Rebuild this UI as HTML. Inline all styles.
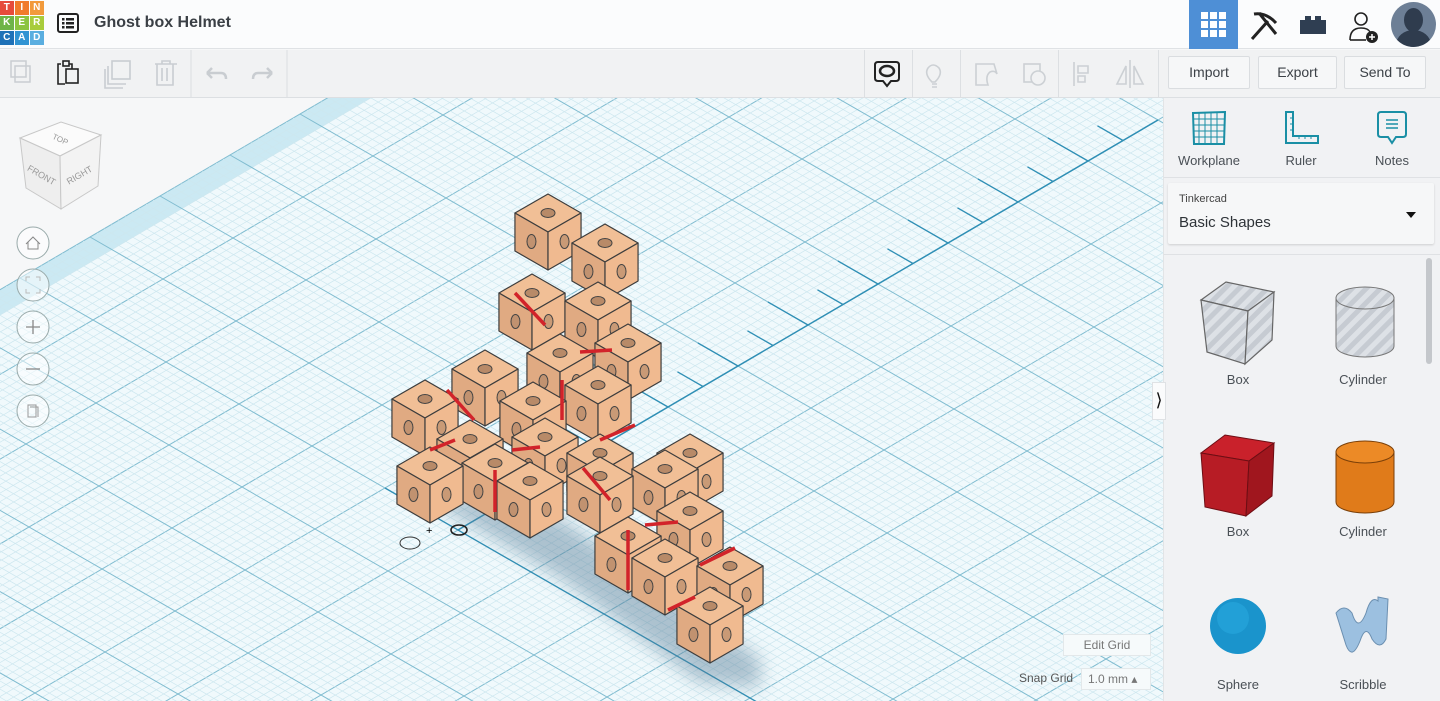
<!DOCTYPE html>
<html><head><meta charset="utf-8">
<style>
*{margin:0;padding:0;box-sizing:border-box}
html,body{width:1440px;height:701px;overflow:hidden}
body{font-family:"Liberation Sans",sans-serif;background:#f6f7f8;position:relative}
#hdr{position:absolute;left:0;top:0;width:1440px;height:49px;background:#fbfcfd;border-bottom:1px solid #dfe2e5}
#tb{position:absolute;left:0;top:50px;width:1440px;height:48px;background:#f1f2f3;border-bottom:1px solid #dcdfe2}
.logo{position:absolute;left:0;top:0;width:44px;height:46px}
.logo div{position:absolute;width:13.5px;height:13.5px;color:#fff;font-size:10px;font-weight:bold;text-align:center;line-height:14px}
.title{position:absolute;left:94px;top:14px;font-size:16px;color:#3a3f45;font-weight:bold}
.btn{position:absolute;top:56px;height:33px;background:#f6f7f8;border:1px solid #dadde0;border-radius:2px;font-size:14px;color:#3c4147;text-align:center;line-height:31px}
#panel{position:absolute;left:1163px;top:98px;width:277px;height:603px;background:#f1f2f4;border-left:1px solid #e2e4e6;overflow:hidden}
.lbl{position:absolute;font-size:13px;color:#4a5056;text-align:center}
.vsep{position:absolute;top:50px;width:1px;height:47px;background:#dcdfe2}
</style></head><body>
<svg id="view" width="1163" height="603" style="position:absolute;left:0;top:98px"></svg>

<div id="hdr">
 <div class="logo">
  <div style="left:0;top:1px;background:#e64b3c">T</div><div style="left:15px;top:1px;background:#f07b2c">I</div><div style="left:30px;top:1px;background:#f29a3b">N</div>
  <div style="left:0;top:16px;background:#6eb448">K</div><div style="left:15px;top:16px;background:#8cc440">E</div><div style="left:30px;top:16px;background:#a8cc3c">R</div>
  <div style="left:0;top:31px;background:#1f72b8">C</div><div style="left:15px;top:31px;background:#3194d3">A</div><div style="left:30px;top:31px;background:#5aaee0">D</div>
 </div>
 <svg style="position:absolute;left:57px;top:13px" width="22" height="20"><rect x="1" y="1" width="20" height="18" rx="2" fill="none" stroke="#222" stroke-width="2"/><g fill="#222"><rect x="5" y="5" width="2.5" height="2.5"/><rect x="9" y="5" width="8" height="2.5"/><rect x="5" y="9" width="2.5" height="2.5"/><rect x="9" y="9" width="8" height="2.5"/><rect x="5" y="13" width="2.5" height="2.5"/><rect x="9" y="13" width="8" height="2.5"/></g></svg>
 <div class="title">Ghost box Helmet</div>
 <div style="position:absolute;left:1189px;top:0;width:49px;height:49px;background:#4e8fd6"></div>
 <svg style="position:absolute;left:1201px;top:12px" width="25" height="25"><g fill="#fff"><rect x="0" y="0" width="7" height="7"/><rect x="9" y="0" width="7" height="7"/><rect x="18" y="0" width="7" height="7"/><rect x="0" y="9" width="7" height="7"/><rect x="9" y="9" width="7" height="7"/><rect x="18" y="9" width="7" height="7"/><rect x="0" y="18" width="7" height="7"/><rect x="9" y="18" width="7" height="7"/><rect x="18" y="18" width="7" height="7"/></g></svg>
 <svg style="position:absolute;left:1248px;top:9px" width="32" height="32"><path d="M6 5 Q18 3 28 14 M11 4 L28 25 M20 12 L4 30" stroke="#222" stroke-width="3" fill="none"/></svg>
 <svg style="position:absolute;left:1298px;top:14px" width="30" height="22"><path d="M2 6 h5 v-4 h6 v4 h4 v-4 h6 v4 h5 v14 h-26z" fill="#2f3e52"/></svg>
 <svg style="position:absolute;left:1348px;top:10px" width="32" height="34"><circle cx="13" cy="9" r="6" fill="none" stroke="#222" stroke-width="1.6"/><path d="M2 30 Q2 18 13 18 Q20 18 22 22" fill="none" stroke="#222" stroke-width="1.6"/><line x1="2" y1="30" x2="18" y2="30" stroke="#222" stroke-width="1.6"/><circle cx="24" cy="27" r="6" fill="#222"/><path d="M24 24v6M21 27h6" stroke="#fff" stroke-width="1.5"/></svg>
 <div style="position:absolute;left:1391px;top:2px;width:45px;height:45px;border-radius:50%;background:#6d7f96;overflow:hidden"><div style="position:absolute;left:13px;top:6px;width:19px;height:24px;border-radius:50%;background:#2f3c4e"></div><div style="position:absolute;left:5px;top:28px;width:35px;height:30px;border-radius:50%;background:#2f3c4e"></div></div>
</div>

<div id="tb">
 <svg style="position:absolute;left:0;top:0" width="300" height="48">
  <g fill="none" stroke="#c9cdd1" stroke-width="1.5"><rect x="11" y="11" width="15" height="16"/><rect x="15" y="16" width="15" height="16"/></g>
  <g fill="none" stroke="#222" stroke-width="1.6"><path d="M61 14 h-3 v20 h7 M69 14 h3 v5"/><rect x="63" y="11" width="6" height="5"/><rect x="66" y="19" width="12" height="14"/></g>
  <g fill="none" stroke="#c9cdd1" stroke-width="1.6"><rect x="112" y="11" width="18" height="18"/><path d="M108 16 v18 h18"/><path d="M105 19 v19 h18" /></g>
  <g fill="none" stroke="#c9cdd1" stroke-width="1.6"><path d="M155 14h22M162 14v-3h8v3M157 14v21h16v-21M162 18v13M167 18v13"/></g>
  <line x1="191" y1="0" x2="191" y2="48" stroke="#dcdfe2"/>
  <path d="M207 23 h14 q5 0 5 6 M207 23 l5 -5 M207 23 l5 5" stroke="#c9cdd1" stroke-width="2.5" fill="none"/>
  <path d="M272 23 h-14 q-5 0 -5 6 M272 23 l-5 -5 M272 23 l-5 5" stroke="#c9cdd1" stroke-width="2.5" fill="none"/>
  <line x1="287" y1="0" x2="287" y2="48" stroke="#dcdfe2"/>
 </svg>
 <div class="vsep" style="left:864px;top:0"></div><div class="vsep" style="left:912px;top:0"></div><div class="vsep" style="left:960px;top:0"></div><div class="vsep" style="left:1058px;top:0"></div><div class="vsep" style="left:1158px;top:0"></div>
 <svg style="position:absolute;left:870px;top:8px" width="290" height="34">
  <path d="M8 4 h18 q3 0 3 3 v13 q0 3 -3 3 h-5 l-4 5 l-4 -5 h-5 q-3 0 -3 -3 v-13 q0 -3 3 -3z" fill="none" stroke="#222" stroke-width="2"/><ellipse cx="17" cy="13" rx="7" ry="5" fill="none" stroke="#222" stroke-width="2.5"/>
  <path d="M62 24 q-8 -8 -4 -14 q5 -6 11 0 q4 6 -4 14z M62 26h5 M62 29h5" fill="none" stroke="#ccd0d4" stroke-width="1.6"/>
  <path d="M106 6 h18 l3 10 q-2 -4 -7 -2 q-5 4 -2 13 h-12z" fill="none" stroke="#ccd0d4" stroke-width="1.6"/>
  <rect x="154" y="6" width="16" height="18" fill="none" stroke="#ccd0d4" stroke-width="1.6"/><circle cx="168" cy="20" r="7" fill="#f1f2f3" stroke="#ccd0d4" stroke-width="1.6"/>
  <path d="M204 4 v24 M208 8 h10 v7 h-10z M208 18 h7 v6 h-7z" fill="none" stroke="#ccd0d4" stroke-width="1.6"/>
  <path d="M260 2 v28 M256 8 l-9 18 h9z M264 8 l9 18 h-9z" fill="none" stroke="#ccd0d4" stroke-width="1.6"/>
 </svg>
</div>
<div class="btn" style="left:1168px;width:82px">Import</div>
<div class="btn" style="left:1258px;width:79px">Export</div>
<div class="btn" style="left:1344px;width:82px">Send To</div>

<div id="panel">
 <svg style="position:absolute;left:27px;top:13px" width="36" height="34"><path d="M2 2 L34 1 L33 33 L3 33z" fill="none" stroke="#1a8fa5" stroke-width="2"/><g stroke="#1a8fa5" stroke-width="1"><path d="M8 2v31M14 2v31M20 2v31M26 2v31M2 8h32M2 14h32M2 20h32M2 26h32"/></g></svg>
 <svg style="position:absolute;left:118px;top:12px" width="40" height="36"><path d="M4 2h7v24h25v7h-32z" fill="none" stroke="#1a8fa5" stroke-width="2"/><path d="M11 8h-3M11 14h-3M11 20h-3M17 26v3M23 26v3M29 26v3" stroke="#1a8fa5"/></svg>
 <svg style="position:absolute;left:213px;top:12px" width="30" height="36"><path d="M4 2h22q3 0 3 3v19q0 3 -3 3h-7l-4 6l-4-6h-7q-3 0 -3-3v-19q0-3 3-3z" fill="none" stroke="#1a8fa5" stroke-width="2"/><path d="M9 10h12M9 14h12M9 18h12" stroke="#1a8fa5" stroke-width="1.5"/></svg>
 <div class="lbl" style="left:0;top:55px;width:90px">Workplane</div>
 <div class="lbl" style="left:92px;top:55px;width:90px">Ruler</div>
 <div class="lbl" style="left:183px;top:55px;width:90px">Notes</div>
 <div style="position:absolute;left:0;top:79px;width:277px;height:1px;background:#dfe1e4"></div>
 <div style="position:absolute;left:4px;top:85px;width:266px;height:61px;background:#f6f7f8;border-radius:2px;box-shadow:0 1px 2px rgba(0,0,0,.15)">
  <div style="position:absolute;left:11px;top:10px;font-size:11px;color:#444">Tinkercad</div>
  <div style="position:absolute;left:11px;top:31px;font-size:15px;color:#2e3338">Basic Shapes</div>
  <div style="position:absolute;left:238px;top:29px;width:0;height:0;border-left:5px solid transparent;border-right:5px solid transparent;border-top:6px solid #111"></div>
 </div>
 <div style="position:absolute;left:0;top:156px;width:277px;height:1px;background:#dfe1e4"></div>
 <div style="position:absolute;left:262px;top:160px;width:6px;height:106px;background:#c4c7cb;border-radius:3px"></div>
 <svg style="position:absolute;left:0;top:170px" width="260" height="430">
  <defs><pattern id="st" width="10" height="10" patternUnits="userSpaceOnUse" patternTransform="rotate(45)"><rect width="10" height="10" fill="#c6cbd2"/><rect width="5" height="10" fill="#dde1e6"/></pattern></defs>
  <path d="M37 32 L62 14 L110 24 L84 43z" fill="url(#st)" stroke="#666" stroke-width="1.2"/>
  <path d="M37 32 L84 43 L81 96 L43 84z" fill="url(#st)" stroke="#666" stroke-width="1.2"/>
  <path d="M84 43 L110 24 L108 72 L81 96z" fill="url(#st)" stroke="#666" stroke-width="1.2"/>
  <path d="M172 30 v48 a29 11 0 0 0 58 0 v-48z" fill="url(#st)" stroke="#777"/><ellipse cx="201" cy="30" rx="29" ry="11" fill="url(#st)" stroke="#777"/>
  <path d="M37 185 L61 167 L110 175 L85 193z" fill="#c9212b" stroke="#6d0e14"/>
  <path d="M37 185 L85 193 L82 248 L41 239z" fill="#b71c25" stroke="#6d0e14"/>
  <path d="M85 193 L110 175 L108 228 L82 248z" fill="#a0161e" stroke="#6d0e14"/>
  <path d="M172 184 v50 a29 11 0 0 0 58 0 v-50z" fill="#e07b1a" stroke="#7a3f08"/><ellipse cx="201" cy="184" rx="29" ry="11" fill="#ec8a26" stroke="#7a3f08"/>
  <circle cx="74" cy="358" r="28" fill="#1a94cc"/><circle cx="69" cy="350" r="16" fill="#28a8dd" opacity=".6"/>
  <path d="M172 345 q8 -10 16 0 q6 20 14 0 q5 -18 12 -12 l0 -4 l10 2 l-2 40 q-6 12 -14 0 q-6 -16 -12 2 q-8 20 -14 4z" fill="#9cc0e0" stroke="#6b8fb0"/>
 </svg>
 <div class="lbl" style="left:34px;top:274px;width:80px">Box</div>
 <div class="lbl" style="left:159px;top:274px;width:80px">Cylinder</div>
 <div class="lbl" style="left:34px;top:426px;width:80px">Box</div>
 <div class="lbl" style="left:159px;top:426px;width:80px">Cylinder</div>
 <div class="lbl" style="left:34px;top:579px;width:80px">Sphere</div>
 <div class="lbl" style="left:159px;top:579px;width:80px">Scribble</div>
</div>
<div style="position:absolute;left:1152px;top:382px;width:14px;height:38px;background:#fafbfc;border:1px solid #dfe2e5;font-size:18px;line-height:34px;text-align:center;color:#111">&#10217;</div>

<div style="position:absolute;left:1063px;top:634px;width:88px;height:22px;background:#f6fafb;border:1px solid #e3e8ea;font-size:12px;color:#777;text-align:center;line-height:20px">Edit Grid</div>
<div style="position:absolute;left:1019px;top:671px;font-size:12px;color:#555">Snap Grid</div>
<div style="position:absolute;left:1081px;top:668px;width:70px;height:22px;background:#f6fafb;border:1px solid #e3e8ea;font-size:12px;color:#777;line-height:20px;padding-left:6px">1.0 mm &#9652;</div>

<svg style="position:absolute;left:14px;top:118px" width="95" height="95">
 <path d="M6 20 L47 4 L87 17 L46 38z" fill="#fbfbfb" stroke="#c8c8c8"/>
 <path d="M6 20 L46 38 L47 91 L12 70z" fill="#eeeeee" stroke="#c8c8c8"/>
 <path d="M46 38 L87 17 L84 68 L47 91z" fill="#f3f3f3" stroke="#c8c8c8"/>
 <text x="46" y="24" font-size="8" fill="#999" transform="rotate(25 46 22)" text-anchor="middle">TOP</text>
 <text x="27" y="60" font-size="9" fill="#999" transform="rotate(30 27 58)" text-anchor="middle">FRONT</text>
 <text x="66" y="60" font-size="9" fill="#999" transform="rotate(-30 66 58)" text-anchor="middle">RIGHT</text>
</svg>
<svg style="position:absolute;left:15px;top:225px" width="36" height="205">
 <g fill="rgba(255,255,255,.5)" stroke="#9aa" stroke-width="1"><circle cx="18" cy="18" r="16"/><circle cx="18" cy="60" r="16"/><circle cx="18" cy="102" r="16"/><circle cx="18" cy="144" r="16"/><circle cx="18" cy="186" r="16"/></g>
 <path d="M11 19 L18 12 L25 19 M13 17v7h10v-7" fill="none" stroke="#888"/>
 <path d="M11 56v-4h4M21 52h4v4M25 64v4h-4M15 68h-4v-4" fill="none" stroke="#bbb"/>
 <path d="M11 102h14M18 95v14" stroke="#888" stroke-width="1.3"/>
 <path d="M11 144h14" stroke="#888" stroke-width="1.3"/>
 <path d="M13 180h8v12h-8zM15 182h8v10" fill="none" stroke="#999"/>
</svg>

<script>
const v=document.getElementById('view');
let h='';
const O=[458,432],A=[73,42],B=[70,-41];
function P(u,w){return [O[0]+u*A[0]+w*B[0],O[1]+u*A[1]+w*B[1]];}
let c=[P(-6,-12),P(-6,14),P(20,14),P(20,-12)];
h+=`<polygon points="${c.map(p=>p.join(',')).join(' ')}" fill="#f0f9fc"/>`;
let bd=[P(-6,-12),P(-6,14),P(-5.7,14),P(-5.7,-12)];
h+=`<polygon points="${bd.map(p=>p.join(',')).join(' ')}" fill="#cbe9f3"/>`;
for(let i=-60;i<=200;i++){let u=i/10;let a=P(u,-12),b=P(u,14);let mj=i%10==0;
 h+=`<line x1="${a[0]}" y1="${a[1]}" x2="${b[0]}" y2="${b[1]}" stroke="${mj?'#80bcd0':'#cde7ef'}" stroke-width="${mj?1:0.7}"/>`;}
for(let i=-120;i<=140;i++){let w=i/10;let a=P(-6,w),b=P(20,w);let mj=i%10==0;
 h+=`<line x1="${a[0]}" y1="${a[1]}" x2="${b[0]}" y2="${b[1]}" stroke="${mj?'#80bcd0':'#cde7ef'}" stroke-width="${mj?1:0.7}"/>`;}
let a1=P(0,0),a2=P(0,10);h+=`<line x1="${a1[0]}" y1="${a1[1]}" x2="${a2[0]}" y2="${a2[1]}" stroke="#2f8fb5" stroke-width="1.5"/>`;
for(let k=1;k<20;k++){let w=k/2,p=P(0,w),q=P(k%2?-0.35:-0.55,w);h+=`<line x1="${p[0]}" y1="${p[1]}" x2="${q[0]}" y2="${q[1]}" stroke="#2f8fb5" stroke-width="1.3"/>`;}
let b1=P(-1,0),b2=P(4.5,0);h+=`<line x1="${b1[0]}" y1="${b1[1]}" x2="${b2[0]}" y2="${b2[1]}" stroke="#2f8fb5" stroke-width="1.3"/>`;
h+=`<defs><filter id="bl"><feGaussianBlur stdDeviation="9"/></filter></defs>`;
h+=`<polygon points="400,385 560,420 760,560 760,590 700,585 560,480" fill="#5a7f99" opacity=".45" filter="url(#bl)"/>`;
h+=`<text x="426" y="436" font-size="11">+</text><ellipse cx="459" cy="432" rx="8" ry="5" fill="none" stroke="#222" stroke-width="1.6"/><ellipse cx="410" cy="445" rx="10" ry="6" fill="none" stroke="#333"/>`;
const cubes=[[548,232],[605,262],[532,312],[598,320],[560,372],[628,362],[598,404],[485,388],[533,420],[425,418],[545,456],[470,458],[430,485],[600,472],[665,488],[495,482],[530,500],[600,495],[690,472],[690,530],[628,555],[665,577],[730,585],[710,625]];
const s=38,k=0.87*s;
cubes.sort((p,q)=>p[1]-q[1]);
for(const [x,y0] of cubes){let y=y0-98;
 let T=[x,y-s],UR=[x+k,y-s/2],LR=[x+k,y+s/2],Bt=[x,y+s],LL=[x-k,y+s/2],UL=[x-k,y-s/2],C=[x,y];
 const f=(pts,col)=>`<polygon points="${pts.map(p=>p.join(',')).join(' ')}" fill="${col}" stroke="#3d3d3d" stroke-width="1.2" stroke-linejoin="round"/>`;
 h+=f([T,UR,C,UL],'#f1bf96')+f([UL,C,Bt,LL],'#e0aa82')+f([C,UR,LR,Bt],'#f0ba90');
 h+=`<ellipse cx="${x}" cy="${y-s/2}" rx="7" ry="4.5" fill="#b88a68" stroke="#444"/>`;
 h+=`<ellipse cx="${x-k/2}" cy="${y+s/4}" rx="4.5" ry="7" fill="#c19270" stroke="#444"/>`;
 h+=`<ellipse cx="${x+k/2}" cy="${y+s/4}" rx="4.5" ry="7" fill="#c99a76" stroke="#444"/>`;
}
const reds=[[515,293,545,325],[447,390,474,420],[430,450,455,440],[495,470,495,512],[512,450,540,447],[628,530,628,590],[645,525,678,522],[700,565,735,548],[580,352,612,350],[562,380,562,420],[600,440,635,425],[583,468,610,500],[668,610,695,597]];
for(const r of reds)h+=`<line x1="${r[0]}" y1="${r[1]-98}" x2="${r[2]}" y2="${r[3]-98}" stroke="#d2232a" stroke-width="3.5"/>`;
v.innerHTML=h;
</script>
</body></html>
